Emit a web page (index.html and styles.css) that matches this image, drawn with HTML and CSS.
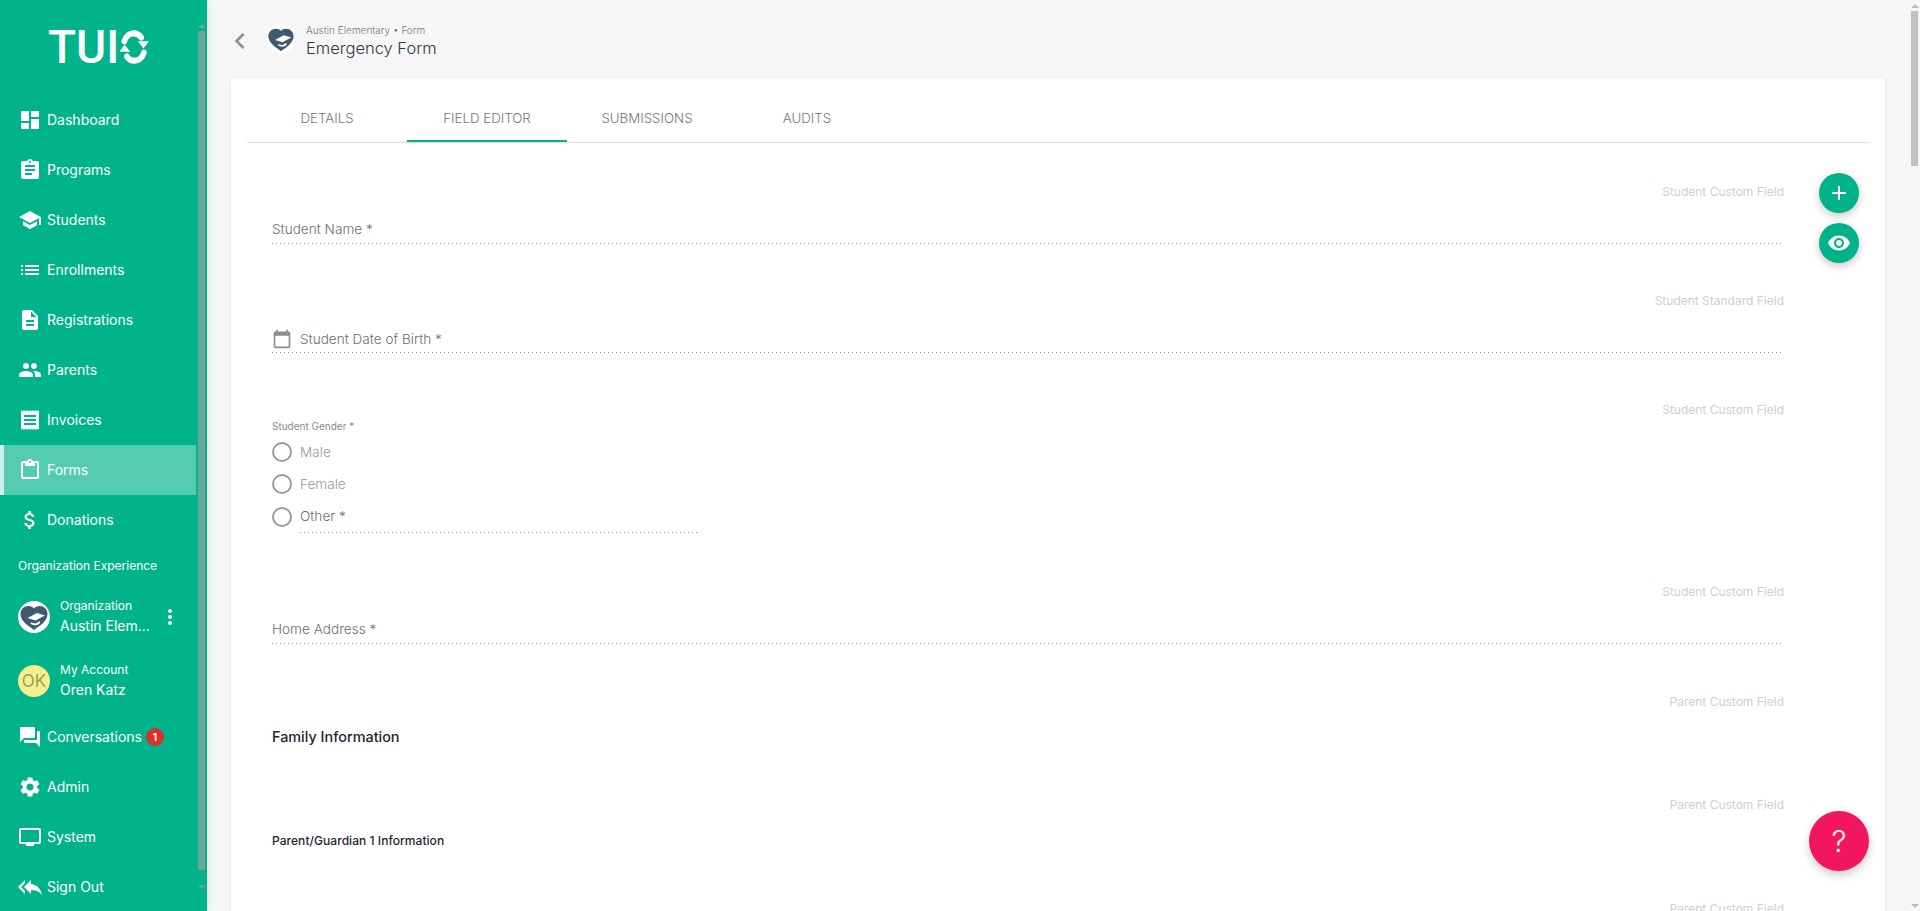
FILE: index.html
```html
<!DOCTYPE html>
<html lang="en">
<head>
<meta charset="utf-8">
<title>Emergency Form</title>
<link rel="stylesheet" href="styles.css">
</head>
<body>
<svg class="defs" width="0" height="0" aria-hidden="true">
  <symbol id="org-heart" viewBox="0 0 30 30">
    <path fill="#3f5a70" d="M15 28C11.500 25 1.500 20 1.500 12 1.500 7.500 5 4 9.500 4c2.400 0 4.300.9 5.500 2.400C16.200 4.900 18.100 4 20.500 4 25 4 28.500 7.500 28.500 12c0 8-10 13-13.500 16z"/>
    <path fill="#fff" d="M8.500 16l9.500-5 8 2.500-9.500 5z"/>
    <path fill="#fff" d="M11.500 20.500l5 1 4.500-2.500-.3 2.500c-1.300 1.200-2.700 1.800-4.400 1.800-1.800 0-3.800-.9-4.800-1.800z"/>
  </symbol>
</svg>

<div class="app">
  <aside class="sidebar">
    <div class="logo">
      <span class="logo-text">TUI</span>
      <svg class="logo-o" viewBox="0 0 34 36" width="29" height="34" preserveAspectRatio="none">
        <path fill="none" stroke="#fff" stroke-width="6.500" stroke-linecap="round" d="M5 12c1.500-5 6-8.500 11-8.500 3.500 0 6.800 1.500 9 4.500"/>
        <path fill="none" stroke="#fff" stroke-width="6.500" stroke-linecap="round" d="M28 24c-1.500 5-6 8.500-11 8.500-3.500 0-6.800-1.500-9-4.500"/>
        <path fill="#fff" d="M21 12h13l-6.500 7.500z"/>
        <path fill="#fff" d="M-1 23h13l-6.500-7.500z"/>
      </svg>
    </div>

    <nav class="nav">
      <a class="nav-item"><svg class="ico" viewBox="0 0 24 24"><path d="M3 13h8V3H3v10zm0 8h8v-6H3v6zm10 0h8V11h-8v10zm0-18v6h8V3h-8z"/></svg><span>Dashboard</span></a>
      <a class="nav-item"><svg class="ico" viewBox="0 0 24 24"><path d="M19 3h-4.180C14.400 1.840 13.300 1 12 1c-1.300 0-2.400.84-2.820 2H5c-1.100 0-2 .9-2 2v14c0 1.100.9 2 2 2h14c1.100 0 2-.9 2-2V5c0-1.100-.9-2-2-2zm-7 0c.55 0 1 .45 1 1s-.45 1-1 1-1-.45-1-1 .45-1 1-1zm2 14H7v-2h7v2zm3-4H7v-2h10v2zm0-4H7V7h10v2z"/></svg><span>Programs</span></a>
      <a class="nav-item"><svg class="ico" viewBox="0 0 24 24"><path d="M5 13.180v4L12 21l7-3.820v-4L12 17l-7-3.820zM12 3L1 9l11 6 9-4.910V17h2V9L12 3z"/></svg><span>Students</span></a>
      <a class="nav-item"><svg class="ico" viewBox="0 0 24 24"><path d="M3 13h2v-2H3v2zm0 4h2v-2H3v2zm0-8h2V7H3v2zm4 4h14v-2H7v2zm0 4h14v-2H7v2zM7 7v2h14V7H7z"/></svg><span>Enrollments</span></a>
      <a class="nav-item"><svg class="ico" viewBox="0 0 24 24"><path d="M14 2H6c-1.100 0-1.990.9-1.990 2L4 20c0 1.100.89 2 1.990 2H18c1.100 0 2-.9 2-2V8l-6-6zm2 16H8v-2h8v2zm0-4H8v-2h8v2zm-3-5V3.500L18.500 9H13z"/></svg><span>Registrations</span></a>
      <a class="nav-item"><svg class="ico" viewBox="0 0 24 24"><path d="M16 11c1.660 0 2.990-1.340 2.990-3S17.660 5 16 5c-1.660 0-3 1.340-3 3s1.340 3 3 3zm-8 0c1.660 0 2.990-1.340 2.990-3S9.660 5 8 5C6.340 5 5 6.340 5 8s1.340 3 3 3zm0 2c-2.330 0-7 1.170-7 3.500V19h14v-2.500c0-2.330-4.670-3.500-7-3.500zm8 0c-.29 0-.62.02-.97.05 1.160.84 1.970 1.970 1.970 3.450V19h6v-2.500c0-2.330-4.670-3.500-7-3.500z"/></svg><span>Parents</span></a>
      <a class="nav-item"><svg class="ico" viewBox="0 0 24 24"><path d="M18 17H6v-2h12v2zm0-4H6v-2h12v2zm0-4H6V7h12v2zM3 22l1.500-1.500L6 22l1.500-1.500L9 22l1.500-1.500L12 22l1.500-1.500L15 22l1.500-1.500L18 22l1.500-1.500L21 22V2l-1.500 1.500L18 2l-1.500 1.500L15 2l-1.500 1.500L12 2l-1.500 1.500L9 2 7.500 3.500 6 2 4.500 3.500 3 2v20z"/></svg><span>Invoices</span></a>
      <a class="nav-item nav-active"><svg class="ico" viewBox="0 0 24 24"><path d="M19 3h-4.180C14.400 1.840 13.300 1 12 1c-1.300 0-2.400.84-2.820 2H5c-1.100 0-2 .9-2 2v14c0 1.100.9 2 2 2h14c1.100 0 2-.9 2-2V5c0-1.100-.9-2-2-2zm-7 0c.55 0 1 .45 1 1s-.45 1-1 1-1-.45-1-1 .45-1 1-1zm7 16H5V5h2v3h10V5h2v14z"/></svg><span>Forms</span></a>
      <a class="nav-item"><svg class="ico" viewBox="0 0 24 24"><path d="M11.800 10.900c-2.270-.59-3-1.200-3-2.150 0-1.090 1.010-1.850 2.700-1.850 1.780 0 2.440.85 2.500 2.100h2.210c-.07-1.720-1.120-3.300-3.210-3.810V3h-3v2.160c-1.940.42-3.500 1.680-3.500 3.610 0 2.310 1.910 3.460 4.700 4.130 2.500.6 3 1.480 3 2.410 0 .69-.49 1.790-2.700 1.790-2.060 0-2.870-.92-2.980-2.100h-2.200c.12 2.190 1.760 3.420 3.680 3.830V21h3v-2.150c1.950-.37 3.500-1.500 3.500-3.550 0-2.840-2.430-3.810-4.700-4.400z"/></svg><span>Donations</span></a>

      <div class="nav-section">Organization Experience</div>

      <div class="profile profile-org">
        <span class="org-avatar"><svg viewBox="0 0 30 30" width="30" height="30"><use href="#org-heart"/></svg></span>
        <div class="profile-text"><div class="profile-top">Organization</div><div class="profile-name">Austin Elem...</div></div>
        <svg class="ico more" viewBox="0 0 24 24"><path d="M12 8c1.100 0 2-.9 2-2s-.9-2-2-2-2 .9-2 2 .9 2 2 2zm0 2c-1.100 0-2 .9-2 2s.9 2 2 2 2-.9 2-2-.9-2-2-2zm0 6c-1.100 0-2 .9-2 2s.9 2 2 2 2-.9 2-2-.9-2-2-2z"/></svg>
      </div>
      <div class="profile profile-me">
        <span class="me-avatar">OK</span>
        <div class="profile-text"><div class="profile-top">My Account</div><div class="profile-name">Oren Katz</div></div>
      </div>

      <a class="nav-item"><svg class="ico" viewBox="0 0 24 24"><path d="M21 6h-2v9H6v2c0 .55.45 1 1 1h11l4 4V7c0-.55-.45-1-1-1zm-4 6V3c0-.55-.45-1-1-1H3c-.55 0-1 .45-1 1v14l4-4h10c.55 0 1-.45 1-1z"/></svg><span>Conversations</span><b class="badge">1</b></a>
      <a class="nav-item"><svg class="ico" viewBox="0 0 24 24"><path d="M19.140 12.940c.04-.3.06-.61.06-.94 0-.32-.02-.64-.07-.94l2.030-1.580c.18-.14.23-.41.12-.61l-1.920-3.320c-.12-.22-.37-.29-.59-.22l-2.390.96c-.5-.38-1.030-.7-1.620-.94l-.36-2.540c-.04-.24-.24-.41-.48-.41h-3.840c-.24 0-.43.17-.47.41l-.36 2.540c-.59.24-1.130.57-1.620.94l-2.390-.96c-.22-.08-.47 0-.59.22L2.740 8.870c-.12.21-.08.47.12.61l2.030 1.580c-.05.3-.09.63-.09.94s.02.64.07.94l-2.030 1.580c-.18.14-.23.41-.12.61l1.920 3.320c.12.22.37.29.59.22l2.390-.96c.5.38 1.030.7 1.620.94l.36 2.540c.05.24.24.41.48.41h3.840c.24 0 .44-.17.47-.41l.36-2.540c.59-.24 1.130-.56 1.620-.94l2.390.96c.22.08.47 0 .59-.22l1.920-3.320c.12-.22.07-.47-.12-.61l-2.010-1.580zM12 15.600c-1.980 0-3.600-1.620-3.600-3.600s1.620-3.600 3.600-3.600 3.600 1.620 3.600 3.600-1.620 3.600-3.600 3.600z"/></svg><span>Admin</span></a>
      <a class="nav-item"><svg class="ico" viewBox="0 0 24 24"><path d="M21 3H3c-1.100 0-2 .9-2 2v12c0 1.100.9 2 2 2h5v2h8v-2h5c1.100 0 1.990-.9 1.990-2L23 5c0-1.100-.9-2-2-2zm0 14H3V5h18v12z"/></svg><span>System</span></a>
      <a class="nav-item"><svg class="ico" viewBox="0 0 24 24"><path d="M7 8V5l-7 7 7 7v-3l-4-4 4-4zm6 1V5l-7 7 7 7v-4.100c5 0 8.500 1.600 11 5.100-1-5-4-10-11-11z"/></svg><span>Sign Out</span></a>
    </nav>

    <div class="side-scroll">
      <span class="arrow-up"></span>
      <span class="side-thumb"></span>
      <span class="arrow-down"></span>
    </div>
  </aside>

  <main class="main">
    <header class="header">
      <svg class="back" viewBox="0 0 24 24"><path d="M15.410 7.410L14 6l-6 6 6 6 1.410-1.410L10.830 12z"/></svg>
      <span class="org-avatar head-avatar"><svg viewBox="0 0 30 30" width="28" height="28"><use href="#org-heart"/></svg></span>
      <div class="head-text">
        <div class="crumb">Austin Elementary • Form</div>
        <h1 class="title">Emergency Form</h1>
      </div>
    </header>

    <section class="card">
      <div class="tabs">
        <a class="tab">DETAILS</a>
        <a class="tab tab-active">FIELD EDITOR</a>
        <a class="tab">SUBMISSIONS</a>
        <a class="tab">AUDITS</a>
      </div>

      <div class="fabs">
        <button class="fab"><svg viewBox="0 0 24 24" width="24" height="24"><path d="M19 13h-6v6h-2v-6H5v-2h6V5h2v6h6v2z"/></svg></button>
        <button class="fab"><svg viewBox="0 0 24 24" width="24" height="24"><path d="M12 4.500C7 4.500 2.730 7.610 1 12c1.730 4.390 6 7.500 11 7.500s9.270-3.110 11-7.500c-1.730-4.390-6-7.500-11-7.500zM12 17c-2.760 0-5-2.240-5-5s2.240-5 5-5 5 2.240 5 5-2.240 5-5 5zm0-8c-1.660 0-3 1.340-3 3s1.340 3 3 3 3-1.340 3-3-1.340-3-3-3z"/></svg></button>
      </div>

      <div class="form">
        <div class="field">
          <div class="hint">Student Custom Field</div>
          <div class="input">Student Name *</div>
        </div>
        <div class="field">
          <div class="hint">Student Standard Field</div>
          <div class="input input-date">
            <svg class="cal" viewBox="0 0 24 24"><path d="M20 3h-1V1h-2v2H7V1H5v2H4c-1.100 0-2 .9-2 2v16c0 1.100.9 2 2 2h16c1.100 0 2-.9 2-2V5c0-1.100-.9-2-2-2zm0 18H4V8h16v13z"/></svg>
            <span>Student Date of Birth *</span>
          </div>
        </div>
        <div class="field field-radio">
          <div class="hint">Student Custom Field</div>
          <div class="group-label">Student Gender *</div>
          <div class="radio"><span class="dot"></span><span class="radio-text">Male</span></div>
          <div class="radio"><span class="dot"></span><span class="radio-text">Female</span></div>
          <div class="radio"><span class="dot"></span><span class="radio-other">Other *</span></div>
        </div>
        <div class="field field-address">
          <div class="hint">Student Custom Field</div>
          <div class="input">Home Address *</div>
        </div>
        <div class="field field-head">
          <div class="hint">Parent Custom Field</div>
          <div class="h-large">Family Information</div>
        </div>
        <div class="field field-head">
          <div class="hint">Parent Custom Field</div>
          <div class="h-small">Parent/Guardian 1 Information</div>
        </div>
        <div class="field">
          <div class="hint">Parent Custom Field</div>
        </div>
      </div>
    </section>
  </main>

  <button class="help">?</button>
  <div class="page-scroll">
    <span class="arrow-up"></span>
    <span class="page-thumb"></span>
    <span class="arrow-down arrow-end"></span>
  </div>
</div>
</body>
</html>
```

FILE: styles.css
```css
* { box-sizing: border-box; }
html, body { height: 100%; margin: 0; }
body {
  font-family: Inter, "Noto Sans", sans-serif;
  background: #f6f6f6;
  overflow: hidden;
  color: #8a8a8a;
}
.defs { position: absolute; }
.app { position: relative; display: flex; height: 911px; overflow: hidden; }

/* sidebar */
.sidebar {
  position: relative;
  flex: 0 0 207px;
  width: 207px;
  height: 911px;
  background: #00b38a;
  color: #fff;
  box-shadow: 1px 0 8px rgba(0,0,0,.08);
  z-index: 2;
}
.logo {
  height: 95px;
  padding-top: 27px;
  padding-left: 48px;
  display: flex;
  align-items: flex-start;
}
.logo-text {
  font-family: Roboto, sans-serif;
  font-weight: 500;
  font-size: 46px;
  line-height: 40px;
  letter-spacing: 0;
}
.logo-o { margin-left: 1px; margin-top: 3px; }
.nav { width: 196px; }
.nav-item {
  display: flex;
  align-items: center;
  height: 50px;
  padding-left: 18px;
  gap: 5px;
  font-size: 14px;
  font-weight: 400;
  color: #fff;
}
.nav-item span { margin-top: -2px; }
.ico { width: 24px; height: 24px; fill: #fff; flex: none; }
.nav-active {
  background: rgba(255,255,255,.33);
  box-shadow: inset 4px 0 0 rgba(255,255,255,.7);
}
.nav-section {
  height: 40px;
  padding-left: 18px;
  font-size: 12px;
  font-weight: 400;
  line-height: 41px;
}
.profile { display: flex; align-items: center; padding-left: 18px; }
.profile-org { height: 64px; }
.profile-me { height: 63px; }
.org-avatar {
  width: 32px;
  height: 32px;
  border-radius: 50%;
  background: #fff;
  display: flex;
  align-items: center;
  justify-content: center;
  flex: none;
}
.me-avatar {
  width: 32px;
  height: 32px;
  border-radius: 50%;
  background: #f4f08c;
  color: #9c9c5c;
  font-size: 17px;
  line-height: 32px;
  text-align: center;
  flex: none;
}
.profile-text { margin-left: 10px; width: 98px; }
.profile-top { font-size: 12px; line-height: 18px; }
.profile-name { font-size: 14px; font-weight: 400; line-height: 22px; white-space: nowrap; }
.badge {
  width: 18px;
  height: 18px;
  margin-left: -1px;
  border-radius: 50%;
  background: #d9302c;
  font-size: 10px;
  line-height: 18px;
  text-align: center;
}
.side-scroll {
  position: absolute;
  top: 24px;
  left: 198px;
  width: 7px;
  height: 870px;
  display: flex;
  flex-direction: column;
  align-items: center;
}
.side-thumb { width: 7px; height: 839px; margin: 3px 0 15px; background: #6aa899; }
.arrow-up { width: 0; height: 0; border: 4px solid transparent; border-top: 0; border-bottom: 4px solid #6aa899; }
.arrow-down { width: 0; height: 0; border: 4px solid transparent; border-bottom: 0; border-top: 4px solid #6aa899; }

/* main */
.main { flex: 1; min-width: 0; }
.header {
  display: flex;
  align-items: center;
  height: 78px;
  padding-left: 17px;
}
.back { width: 32px; height: 32px; fill: #8a9096; flex: none; margin: 4px 11px 0 0; }
.head-avatar { width: 28px; height: 28px; }
.head-text { margin-left: 11px; padding-top: 4px; }
.crumb { font-size: 10px; font-weight: 300; line-height: 14px; color: #777; }
.title { margin: 0; font-size: 16.500px; font-weight: 300; line-height: 22px; color: #2e3846; }
.card {
  position: relative;
  margin: 0 35px 0 24px;
  padding: 0 16px;
  height: 900px;
  background: #fff;
  border-radius: 4px;
  box-shadow: 0 1px 4px rgba(0,0,0,.08);
}
.tabs {
  display: flex;
  height: 65px;
  border-bottom: 1px solid #dedede;
}
.tab {
  width: 160px;
  height: 64px;
  text-align: center;
  font-size: 13.300px;
  font-weight: 300;
  line-height: 80px;
  color: #777;
  overflow: hidden;
}
.tab-active { border-bottom: 2px solid #00b38a; }
.fabs {
  position: absolute;
  top: 95px;
  right: 26px;
  display: flex;
  flex-direction: column;
  gap: 10px;
}
.fab {
  width: 40px;
  height: 40px;
  padding: 0;
  border: 0;
  border-radius: 50%;
  background: #00b38a;
  box-shadow: 0 3px 8px rgba(0,0,0,.22);
  display: flex;
  align-items: center;
  justify-content: center;
}
.fab svg { fill: #fff; }
.form { padding: 40px 85px 0 25px; }
.field { margin-bottom: 48px; }
.field-address { margin-bottom: 49px; }
.field-head { margin-bottom: 0; }
.hint {
  height: 18px;
  line-height: 18px;
  text-align: right;
  font-size: 12px;
  color: #cfcfcf;
}
.input {
  height: 43px;
  margin-right: 2px;
  padding-top: 18px;
  line-height: 20px;
  font-size: 13.600px;
  font-weight: 300;
  color: #6e6e6e;
  background: linear-gradient(to right, #8c8c8c 1px, transparent 1px) left bottom / 4px 1px repeat-x;
}
.input-date { display: flex; align-items: center; padding-top: 15px; }
.cal { width: 20px; height: 20px; fill: #8e8e8e; margin-right: 8px; flex: none; }
.field-radio { margin-bottom: 50px; }
.group-label { font-size: 10px; line-height: 12px; margin: 1px 0 4px; color: #8a8a8a; }
.radio { display: flex; align-items: center; height: 32px; }
.radio:last-child { height: 33px; }
.dot {
  width: 20px;
  height: 20px;
  border: 2px solid #9a9a9a;
  border-radius: 50%;
  margin-right: 8px;
  flex: none;
}
.radio-text { font-size: 13.600px; font-weight: 300; color: #999; }
.radio-other {
  width: 397px;
  height: 33px;
  line-height: 33px;
  font-size: 13.600px;
  font-weight: 300;
  color: #6e6e6e;
  background: linear-gradient(to right, #8c8c8c 1px, transparent 1px) left bottom / 4px 1px repeat-x;
}
.h-large {
  height: 85px;
  padding-top: 16px;
  font-size: 14.400px;
  font-weight: 500;
  line-height: 20px;
  color: #1f2430;
}
.h-small {
  height: 86px;
  padding-top: 19px;
  font-size: 12px;
  font-weight: 500;
  line-height: 16px;
  letter-spacing: .05px;
  color: #1f2430;
}

/* floating */
.help {
  position: absolute;
  left: 1809px;
  top: 811px;
  width: 60px;
  height: 60px;
  border: 0;
  padding: 0;
  border-radius: 50%;
  background: #f2165e;
  color: #fff;
  font-family: Inter, sans-serif;
  font-weight: 300;
  font-size: 30px;
  line-height: 60px;
  box-shadow: 0 4px 10px rgba(0,0,0,.2);
  z-index: 3;
}
.page-scroll {
  position: absolute;
  top: 4px;
  left: 1911px;
  width: 7px;
  height: 904px;
  display: flex;
  flex-direction: column;
  align-items: center;
}
.page-scroll .arrow-up { border-bottom-color: #bdbdbd; }
.page-scroll .arrow-down { border-top-color: #bdbdbd; }
.page-thumb { width: 7px; height: 155px; margin-top: 3px; background: #c1c1c1; }
.arrow-end { margin-top: auto; }
```
